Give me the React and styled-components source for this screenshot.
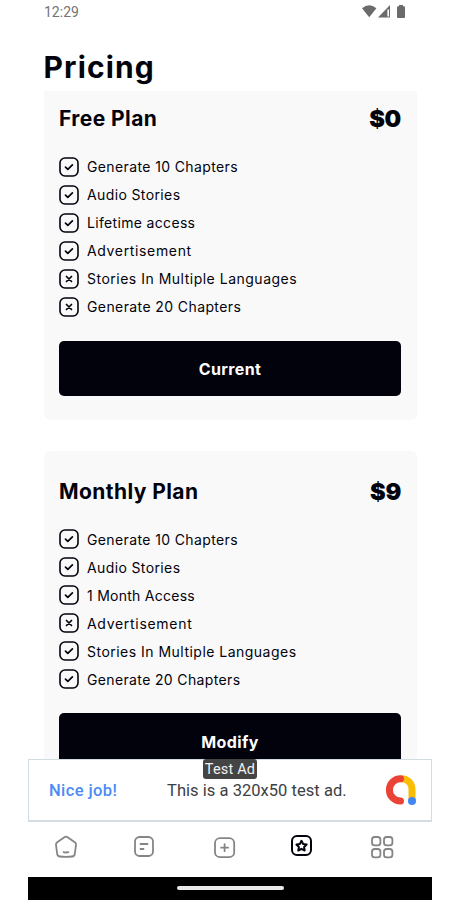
import React from 'react';
import styled, { createGlobalStyle } from 'styled-components';

const GlobalStyle = createGlobalStyle`
  * { box-sizing: border-box; }
  body { margin: 0; background: #fff; }
`;

const Screen = styled.div`
  display: flex;
  flex-direction: column;
  width: 404px;
  height: 900px;
  margin-left: 28px;
  overflow: hidden;
  background: #fff;
  color: #02020c;
  font-family: Inter, 'Open Sans', sans-serif;
`;

const StatusBar = styled.header`
  display: flex;
  flex: none;
  align-items: center;
  justify-content: space-between;
  height: 24px;
  padding: 0 26px 0 16px;
  color: #757575;
  font: 14px/24px Roboto, sans-serif;
`;

const Heading = styled.h1`
  flex: none;
  height: 67px;
  margin: 0;
  padding-left: 15.5px;
  font-size: 30px;
  font-weight: 700;
  line-height: 87px;
  letter-spacing: 1.15px;
`;

const Plans = styled.main`
  flex: none;
  height: 668px;
  padding: 0 15px 0 15.5px;
  overflow: hidden;
`;

const Card = styled.section`
  height: 341px;
  margin: ${({ $first }) => ($first ? '-12.5px 0 31.5px' : '0')};
  padding: 24px 16px 0 15.5px;
  border-radius: 6px;
  background: #f9f9f9;
`;

const CardHeader = styled.div`
  display: flex;
  align-items: center;
  justify-content: space-between;
  height: 32px;
`;

const PlanName = styled.h2`
  margin: 0;
  font-size: 21px;
  font-weight: 700;
  letter-spacing: 0.42px;
`;

const Price = styled.span`
  font-size: 23.5px;
  font-weight: 900;
  letter-spacing: -0.3px;
`;

const Features = styled.ul`
  margin: 18px 0 20px;
  padding: 0;
  list-style: none;
`;

const Feature = styled.li`
  display: flex;
  align-items: center;
  gap: 8px;
  height: 28px;
  font-size: 14px;
  font-weight: 400;
  letter-spacing: ${({ $spacing }) => $spacing}px;
  white-space: nowrap;
`;

const Button = styled.button`
  display: block;
  width: 100%;
  height: 55px;
  padding: 2px 0 0;
  border: 0;
  border-radius: 5px;
  background: #02020c;
  color: #fff;
  font: 700 16px Inter, sans-serif;
  letter-spacing: 0.4px;
`;

const AdBanner = styled.aside`
  position: relative;
  display: flex;
  flex: none;
  align-items: center;
  height: 63px;
  padding: 0 14px 0 20px;
  border: 1px solid #d3dce1;
  border-bottom-width: 2px;
  background: #fff;
  font-family: Roboto, sans-serif;
  font-size: 16.5px;
`;

const AdBadge = styled.span`
  position: absolute;
  top: -1px;
  left: 174px;
  width: 54px;
  height: 20px;
  border-radius: 3px;
  background: #444;
  color: #f1f1f1;
  font-size: 14.5px;
  line-height: 21px;
  letter-spacing: 0.2px;
  text-align: center;
`;

const AdPraise = styled.span`
  width: 118px;
  color: #4b8bf5;
  font-weight: 500;
  letter-spacing: 0.4px;
`;

const AdText = styled.span`
  flex: 1;
  color: #3c4043;
  letter-spacing: 0.04px;
`;

const TabBar = styled.nav`
  display: flex;
  flex: none;
  align-items: center;
  justify-content: space-between;
  height: 55px;
  padding: 0 38px 5px 26px;
`;

const GestureBar = styled.footer`
  display: flex;
  flex: 1;
  justify-content: center;
  padding-top: 9px;
  background: #000;
`;

const GestureHandle = styled.span`
  width: 107px;
  height: 4px;
  border-radius: 2px;
  background: #ebe8e8;
`;

const Icon = styled.svg`
  display: block;
  flex: none;
  overflow: visible;
  fill: none;
  stroke: currentColor;
  stroke-linecap: round;
  stroke-linejoin: round;
`;

const TabIcon = styled(Icon).attrs({ width: 24, height: 24, viewBox: '0 0 24 24' })`
  color: ${({ $active }) => ($active ? '#02020c' : '#858585')};
  stroke-width: ${({ $active }) => ($active ? 2 : 1.8)};
`;

function StatusIcons() {
  return (
    <Icon width="44" height="14" viewBox="0 0 44 14">
      <g fill="#6b6b6b" stroke="none">
        <path d="M0 3.2Q7.2-2.6 14.4 3.2L7.2 12.2Z" />
        <path d="M28 0V12.4H16Z" />
        <path d="M25.4 4.5H27V11.5H25.4Z" fill="#fff" />
        <path d="M37 1.3V0H41V1.3H42.1Q43 1.3 43 2.3V12Q43 13 42.1 13H36Q35 13 35 12V2.3Q35 1.3 36 1.3Z" />
      </g>
    </Icon>
  );
}

function StatusBox({ included }) {
  return (
    <Icon width="20" height="20" viewBox="0 0 20 20" strokeWidth="1.6">
      <rect x="1" y="1" width="18" height="18" rx="5" />
      {included
        ? <path d="M6.5 10.2L8.8 12.4L13.4 7.8" strokeWidth="1.7" />
        : <path d="M7.5 7.5L12.5 12.5M12.5 7.5L7.5 12.5" strokeWidth="1.7" />}
    </Icon>
  );
}

function AdLogo() {
  return (
    <Icon width="32" height="32" viewBox="0 0 32 32" strokeWidth="7">
      <path d="M16 4.8C23 4.8 27 9.6 27 16V26" stroke="#fbbc04" strokeLinecap="butt" />
      <path d="M15.5 4.8A11 11 0 0 0 15.5 27" stroke="#ea4335" />
      <circle cx="27" cy="27" r="4" fill="#4285f4" stroke="none" />
    </Icon>
  );
}

const plans = [
  {
    name: 'Free Plan',
    price: '$0',
    action: 'Current',
    features: [
      ['Generate 10 Chapters', true, 0.38],
      ['Audio Stories', true, 0.38],
      ['Lifetime access', true, 0.33],
      ['Advertisement', true, 0.65],
      ['Stories In Multiple Languages', false, 0.5],
      ['Generate 20 Chapters', false, 0.4],
    ],
  },
  {
    name: 'Monthly Plan',
    price: '$9',
    action: 'Modify',
    features: [
      ['Generate 10 Chapters', true, 0.38],
      ['Audio Stories', true, 0.38],
      ['1 Month Access', true, 0.26],
      ['Advertisement', false, 0.7],
      ['Stories In Multiple Languages', true, 0.48],
      ['Generate 20 Chapters', true, 0.36],
    ],
  },
];

function PlanCard({ plan, first }) {
  return (
    <Card $first={first}>
      <CardHeader>
        <PlanName>{plan.name}</PlanName>
        <Price>{plan.price}</Price>
      </CardHeader>
      <Features>
        {plan.features.map(([label, included, spacing]) => (
          <Feature key={label} $spacing={spacing}>
            <StatusBox included={included} />
            {label}
          </Feature>
        ))}
      </Features>
      <Button>{plan.action}</Button>
    </Card>
  );
}

export default function App() {
  return (
    <>
      <GlobalStyle />
      <Screen>
        <StatusBar>
          12:29
          <StatusIcons />
        </StatusBar>
        <Heading>Pricing</Heading>
        <Plans>
          {plans.map((plan, i) => <PlanCard key={plan.name} plan={plan} first={i === 0} />)}
        </Plans>
        <AdBanner>
          <AdBadge>Test Ad</AdBadge>
          <AdPraise>Nice job!</AdPraise>
          <AdText>This is a 320x50 test ad.</AdText>
          <AdLogo />
        </AdBanner>
        <TabBar>
          <TabIcon>
            <path d="M10.4 2.3Q12 1 13.6 2.3L20.8 7.3Q22.3 8.4 22 10L20.8 19Q20.4 21.3 18.2 21.5Q12 22.3 5.8 21.5Q3.6 21.3 3.2 19L2 10Q1.7 8.4 3.2 7.3Z" />
            <path d="M9.6 17.1Q12 17.9 14.4 17.1" />
          </TabIcon>
          <TabIcon>
            <rect x="2" y="2" width="18" height="19" rx="4.5" />
            <path d="M7.5 9H14.5M7.5 14H10.5" />
          </TabIcon>
          <TabIcon>
            <rect x="3" y="3.2" width="19.2" height="19" rx="5" />
            <path d="M12.6 9.2V16.2M9.1 12.7H16.1" />
          </TabIcon>
          <TabIcon $active>
            <rect x="1" y="1" width="19" height="19" rx="5" />
            <path d="M10.5 5.8L12.1 9L15.6 9.6L13.1 12L13.7 15.5L10.5 13.8L7.3 15.5L7.9 12L5.4 9.6L8.9 9Z" />
          </TabIcon>
          <TabIcon>
            <rect x="2" y="2" width="8.4" height="8.4" rx="2.7" />
            <rect x="14" y="2" width="8.4" height="8.4" rx="2.7" />
            <rect x="2" y="14" width="8.4" height="8.4" rx="2.7" />
            <rect x="14" y="14" width="8.4" height="8.4" rx="2.7" />
          </TabIcon>
        </TabBar>
        <GestureBar>
          <GestureHandle />
        </GestureBar>
      </Screen>
    </>
  );
}
